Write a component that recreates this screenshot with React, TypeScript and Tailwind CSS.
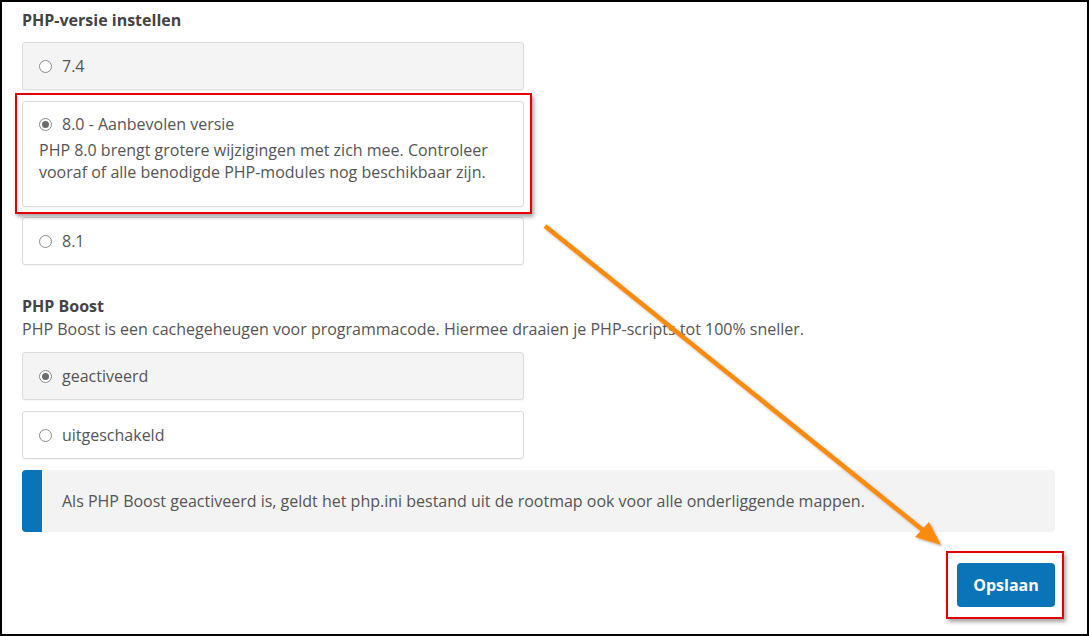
import React from "react";

interface OptionCardProps {
  label: string;
  checked?: boolean;
  shaded?: boolean;
  className?: string;
  children?: React.ReactNode;
}

function Radio({ checked }: { checked?: boolean }) {
  return (
    <span className="flex h-[13px] w-[13px] shrink-0 items-center justify-center rounded-full border border-[#8a8a8a] bg-white">
      {checked && <span className="h-[7px] w-[7px] rounded-full bg-[#6b6b6b]" />}
    </span>
  );
}

function OptionCard({ label, checked, shaded, className = "", children }: OptionCardProps) {
  return (
    <div
      className={`w-[502px] rounded-[3px] border border-[#dcdcdc] px-4 shadow-[0_1px_1px_rgba(0,0,0,0.04)] ${
        shaded ? "bg-[#f4f4f4]" : "bg-white"
      } ${children ? "h-[106px] pt-[12px]" : "flex h-[48px] items-center"} ${className}`}
    >
      <div className="flex h-[20px] items-center gap-[10px]">
        <Radio checked={checked} />
        <span className="text-[16px] leading-[20px] text-[#555]">{label}</span>
      </div>
      {children && <p className="mt-[5px] text-[16px] leading-[22px] text-[#555]">{children}</p>}
    </div>
  );
}

function Arrow() {
  return (
    <svg className="pointer-events-none absolute left-0 top-0" width="1089" height="636">
      <defs>
        <filter id="sh" x="-10%" y="-10%" width="120%" height="120%">
          <feDropShadow dx="1.5" dy="1.5" stdDeviation="1.2" floodColor="#000" floodOpacity="0.3" />
        </filter>
      </defs>
      <g filter="url(#sh)">
        <line x1="543" y1="224" x2="922" y2="529" stroke="#fb8a0e" strokeWidth="4.5" />
        <polygon points="939,543 913,535 927,520" fill="#fb8a0e" />
      </g>
    </svg>
  );
}

export default function App() {
  return (
    <div
      className="relative h-[636px] w-[1089px] overflow-hidden border-2 border-black bg-white"
      style={{ fontFamily: '"Open Sans", "Noto Sans", Arial, sans-serif' }}
    >
      <div className="flex flex-col px-5 pt-[7px]">
        <h2 className="text-[16px] font-bold leading-[22px] text-[#444]">PHP-versie instellen</h2>

        <OptionCard label="7.4" shaded className="mt-[11px]" />
        <div className="relative mt-[11px]">
          <OptionCard label="8.0 - Aanbevolen versie" checked>
            PHP 8.0 brengt grotere wijzigingen met zich mee. Controleer
            <br />
            vooraf of alle benodigde PHP-modules nog beschikbaar zijn.
          </OptionCard>
          <div className="pointer-events-none absolute -left-[7px] -top-[8px] h-[121px] w-[517px] border-2 border-[#e40000] shadow-[2px_3px_4px_rgba(0,0,0,0.35)]" />
        </div>
        <OptionCard label="8.1" className="mt-[10px]" />

        <h2 className="mt-[30px] text-[16px] font-bold leading-[22px] text-[#444]">PHP Boost</h2>
        <p className="mt-[1px] text-[16px] leading-[22px] text-[#555]">
          PHP Boost is een cachegeheugen voor programmacode. Hiermee draaien je PHP-scripts tot 100% sneller.
        </p>

        <OptionCard label="geactiveerd" checked shaded className="mt-[12px]" />
        <OptionCard label="uitgeschakeld" className="mt-[11px]" />

        <div className="mt-[11px] flex h-[62px] w-[1033px] overflow-hidden rounded-[4px] bg-[#f3f3f3]">
          <div className="w-[20px] shrink-0 bg-[#0a74b9]" />
          <p className="flex items-center pl-[20px] text-[16px] text-[#555]">
            Als PHP Boost geactiveerd is, geldt het php.ini bestand uit de rootmap ook voor alle onderliggende mappen.
          </p>
        </div>

        <div className="mt-[31px] flex w-[1033px] justify-end">
          <div className="relative">
            <button className="h-[44px] w-[98px] rounded-[4px] bg-[#0a74b9] text-[16px] font-bold text-white">
              Opslaan
            </button>
            <div className="pointer-events-none absolute -left-[11px] -top-[12px] h-[68px] w-[118px] border-2 border-[#e40000] shadow-[2px_3px_4px_rgba(0,0,0,0.35)]" />
          </div>
        </div>
      </div>
      <Arrow />
    </div>
  );
}
